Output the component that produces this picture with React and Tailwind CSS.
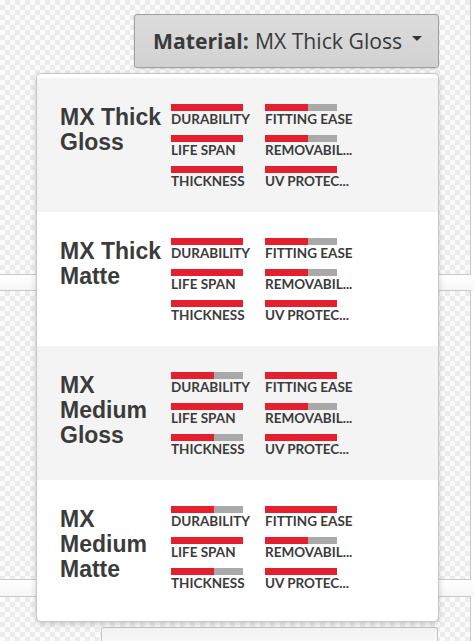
import React from "react";

const rows = [
  { name: "MX Thick Gloss", bg: "bg-[#f4f4f4]", vals: [100, 60, 100, 60, 100, 100] },
  { name: "MX Thick Matte", bg: "bg-white", vals: [100, 60, 100, 60, 100, 100] },
  { name: "MX Medium Gloss", bg: "bg-[#f4f4f4]", vals: [60, 100, 100, 60, 60, 100] },
  { name: "MX Medium Matte", bg: "bg-white", vals: [60, 100, 100, 60, 60, 100] },
];
const labels = ["DURABILITY", "FITTING EASE", "LIFE SPAN", "REMOVABIL...", "THICKNESS", "UV PROTEC..."];

const checker =
  "bg-[image:conic-gradient(#ececec_25%,#fbfbfb_0_50%,#ececec_0_75%,#fbfbfb_0)] bg-[length:10px_10px]";

function Stat({ label, value }) {
  return (
    <div className="w-[90px]">
      <div className="w-[72px] h-[7px] bg-[#a9a9a9] flex">
        <div className="h-full bg-[#e4202f]" style={{ width: `${value}%` }} />
      </div>
      <div className="mt-[1px] text-[13.5px] leading-[15px] font-bold text-[#3b3b3b] whitespace-nowrap [font-family:Lato,'Noto_Sans',sans-serif]">
        {label}
      </div>
    </div>
  );
}

export default function App() {
  return (
    <div className="relative w-[474px] h-[641px] overflow-hidden bg-white">
      <div className="flex flex-col">
        <div className={`h-[275px] w-[471px] border-r border-b border-[#c9c9c9] ${checker}`} />
        <div className="h-[15px] bg-gradient-to-b from-white to-[#f6f6f6]" />
        <div className={`h-[290px] w-[471px] border-r border-y border-[#c9c9c9] ${checker}`} />
        <div className="h-[16px] bg-gradient-to-b from-white to-[#f6f6f6]" />
        <div className={`h-[60px] w-[471px] border-r border-t border-[#c9c9c9] ${checker} pt-[30px] pl-[101px] pr-[32px]`}>
          <div className="h-[40px] bg-gradient-to-b from-[#f3f3f3] to-white border-l border-t border-r border-[#c4c4c4] rounded-t-[3px]" />
        </div>
      </div>

      <div className="absolute left-[134px] top-[14px] w-[305px] h-[54px] rounded-[3px] border border-[#a0a0a0] bg-gradient-to-b from-[#dcdcdc] to-[#d2d2d2] shadow-[0_1px_2px_rgba(0,0,0,0.15)] flex items-center pl-[18px] text-[#3a3a3a] [font-family:'Open_Sans',sans-serif] text-[21.2px]">
        <span className="font-bold">Material:</span>
        <span className="ml-[6px]">MX Thick Gloss</span>
        <svg className="ml-[10px] mb-[5px]" width="10" height="5" viewBox="0 0 10 5">
          <path d="M0 0h10L5 5z" fill="#333" />
        </svg>
      </div>

      <div className="absolute left-[36px] top-[73px] w-[403px] h-[549px] rounded-[5px] border border-[#c6c6c6] bg-white shadow-[0_2px_6px_rgba(0,0,0,0.18)] pt-[4px] overflow-hidden">
        {rows.map((r) => (
          <div key={r.name} className={`${r.bg} h-[134px] flex pl-[23px] pt-[26px]`}>
            <div className="w-[111px] pt-[1px] text-[23px] leading-[25px] font-bold text-[#3b3b3b] [font-family:'Liberation_Sans',Arial,sans-serif]">
              {r.name}
            </div>
            <div className="grid grid-cols-[90px_90px] gap-x-[4px] gap-y-[8px] content-start">
              {labels.map((l, i) => (
                <Stat key={l} label={l} value={r.vals[i]} />
              ))}
            </div>
          </div>
        ))}
      </div>
    </div>
  );
}
